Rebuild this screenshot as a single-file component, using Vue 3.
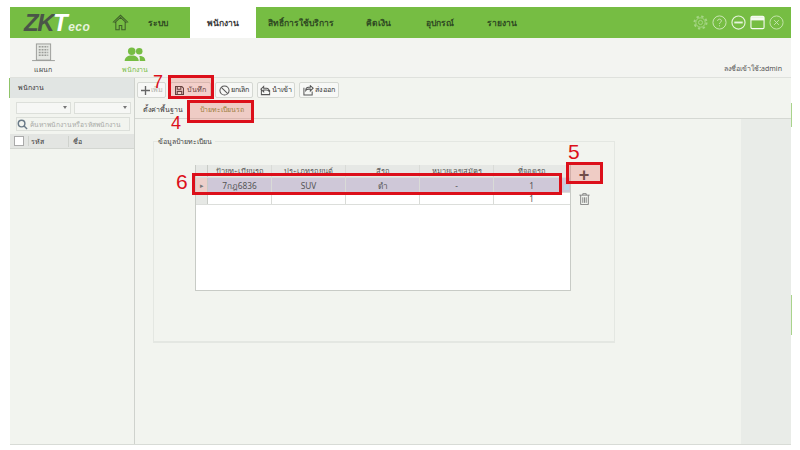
<script setup>
const menus = [
  { label: 'ระบบ', w: 60, first: true },
  { label: 'พนักงาน', w: 66, active: true },
  { label: 'สิทธิ์การใช้บริการ', w: 90 },
  { label: 'คิดเงิน', w: 64 },
  { label: 'อุปกรณ์', w: 60 },
  { label: 'รายงาน', w: 64 }
]
const cols = [
  { label: 'ป้ายทะเบียนรถ', w: 64 },
  { label: 'ประเภทรถยนต์', w: 74 },
  { label: 'สีรถ', w: 74 },
  { label: 'หมายเลขสมัคร', w: 74 },
  { label: 'ที่จอดรถ', w: 75 }
]
const row = ['7กฎ6836', 'SUV', 'ดำ', '-', '1']
</script>

<template>
  <div class="page">
    <div class="window">
      <header class="topbar">
        <div class="logo"><span class="zk">ZK</span><span class="t">T</span><span class="eco">eco</span></div>
        <svg class="home" viewBox="0 0 20 20" width="17" height="17" fill="none" stroke="#3f5f2a" stroke-width="1.200">
          <path d="M1 10 10 1.500 19 10M3 10.500 10 4l7 6.500M4.500 9.500V18.500h4v-5h3v5h4V9.500" />
        </svg>
        <nav class="menu">
          <span v-for="m in menus" :key="m.label" class="menu-item" :class="{ active: m.active, first: m.first }" :style="{ width: m.w + 'px' }">{{ m.label }}</span>
        </nav>
        <div class="winicons">
          <svg viewBox="0 0 16 16" width="15" height="15" fill="none" stroke="#a6d586" stroke-width="1"><circle cx="8" cy="8" r="2.200" /><circle cx="8" cy="8" r="5" /><circle cx="8" cy="8" r="6.500" stroke-width="2" stroke-dasharray="2.500 2.600" /></svg>
          <svg viewBox="0 0 16 16" width="15" height="15" fill="none" stroke="#cfe8bb" stroke-width="1"><circle cx="8" cy="8" r="7" /><path d="M6 6.300c0-2.500 4-2.500 4 0 0 1.500-2 1.500-2 3.200M8 11v1" /></svg>
          <svg viewBox="0 0 16 16" width="15" height="15" fill="none" stroke="#e6f3dc" stroke-width="1.200"><circle cx="8" cy="8" r="7" /><path d="M3.500 8h9" stroke-width="2" /></svg>
          <svg viewBox="0 0 16 16" width="15" height="15" fill="none" stroke="#f6faf2" stroke-width="1.200"><rect x="1" y="1.500" width="14" height="13" rx="1.500" /><path d="M1 4h14" stroke-width="3.500" /></svg>
          <svg viewBox="0 0 16 16" width="15" height="15" fill="none" stroke="#c6e5af" stroke-width="1"><circle cx="8" cy="8" r="7" /><path d="M5.500 5.500l5 5m0-5-5 5" /></svg>
        </div>
      </header>

      <section class="subnav">
        <div class="subitem dept">
          <svg viewBox="0 0 24 20" width="23" height="19" fill="none" stroke="#9a9c98" stroke-width="1"><rect x="4.500" y="1" width="15" height="17" fill="#e4e6e2" /><path d="M7 4h10M7 7h10M7 10h10M7 13h10" stroke-width="1.600" stroke-dasharray="2 1" /><path d="M0 18.500h24" /></svg>
          <span>แผนก</span>
        </div>
        <div class="subitem emp">
          <svg viewBox="0 0 22 16" width="22" height="15" fill="#76bd43"><circle cx="7.500" cy="4.500" r="4" /><circle cx="15.500" cy="4.500" r="3.500" /><path d="M0 15c0-4 3-6 7.500-6s7.500 2 7.500 6zM16 15h6c0-3.500-2-5.500-6.500-5.500 1 1.500.5 3.500.5 5.500z" /></svg>
          <span>พนักงาน</span>
        </div>
        <div class="login">ลงชื่อเข้าใช้:admin</div>
      </section>

      <div class="body">
        <aside class="sidebar">
          <div class="side-title">พนักงาน</div>
          <div class="selects">
            <div class="select s1"><i></i></div>
            <div class="select s2"><i></i></div>
          </div>
          <div class="search">
            <svg viewBox="0 0 12 12" width="11" height="11" fill="none" stroke="#6a7a88" stroke-width="1.600"><circle cx="5" cy="5" r="3.600" /><path d="M7.700 7.700 11 11" /></svg>
            <span>ค้นหาพนักงานหรือรหัสพนักงาน</span>
          </div>
          <div class="side-head">
            <span class="check"><b></b></span>
            <span class="h-code">รหัส</span>
            <span class="h-name">ชื่อ</span>
          </div>
        </aside>

        <main class="content">
          <div class="toolbar">
            <button class="tool add"><svg viewBox="0 0 10 10" width="9" height="9" stroke="#666" stroke-width="1.500"><path d="M5 0v10M0 5h10" /></svg><span class="muted">เพิ่ม</span></button>
            <button class="tool save">
              <svg viewBox="0 0 10 10" width="9" height="9" fill="none" stroke="#333" stroke-width="1.200"><path d="M.6.600h7l1.800 1.800v7H.6zM2.500.600v3h4v-3M2.500 9.400V6h5v3.400" /></svg>
              <span>บันทึก</span>
            </button>
            <button class="tool w38"><svg viewBox="0 0 12 12" width="11" height="11" fill="none" stroke="#555" stroke-width="1.100"><circle cx="6" cy="6" r="5" /><path d="M2.500 2.500l7 7" /></svg><span>ยกเลิก</span></button>
            <button class="tool w38"><svg viewBox="0 0 12 12" width="11" height="11" fill="none" stroke="#555" stroke-width="1.100"><path d="M1.500 5.500v5h9v-5M1 4.500 4 1.500v2h3c2 0 3 1.500 3 3.500-1-1.500-2-1.500-3-1.500H4v2z" /></svg><span>นำเข้า</span></button>
            <button class="tool w40"><svg viewBox="0 0 12 12" width="11" height="11" fill="none" stroke="#555" stroke-width="1.100"><path d="M1 3v8h9V7M11 3.500 8 .800v1.700H6c-2 0-3 1.500-3 3.500 1-1.500 2-1.500 3-1.500h2v2z" /></svg><span>ส่งออก</span></button>
          </div>

          <div class="tabs">
            <span class="tab">ตั้งค่าพื้นฐาน</span>
            <span class="tab current">ป้ายทะเบียนรถ</span>
          </div>

          <div class="panel">
            <div class="panel-main">
              <fieldset class="group">
                <legend>ข้อมูลป้ายทะเบียน</legend>
                <div class="grid-row">
                  <div class="table">
                    <div class="tr head">
                      <span class="gutter"></span>
                      <span v-for="c in cols" :key="c.label" class="td" :style="{ width: c.w + 'px' }">{{ c.label }}</span>
                    </div>
                    <div class="tr selected">
                      <span class="gutter">▸</span>
                      <span v-for="(v, i) in row" :key="i" class="td" :style="{ width: cols[i].w + 'px' }">{{ v }}</span>
                      <i class="cell-handle"></i>
                    </div>
                    <div class="tr blank">
                      <span class="gutter"></span>
                      <span v-for="(c, i) in cols" :key="c.label" class="td" :style="{ width: c.w + 'px' }">{{ i === 4 ? '1' : '' }}</span>
                    </div>
                  </div>
                  <div class="side-actions">
                    <button class="plus">+</button>
                    <svg viewBox="0 0 12 14" width="11" height="12" fill="none" stroke="#777" stroke-width="1"><path d="M0 2.500h12M4 2.500V.8h4v1.700M1.500 2.500v11h9v-11M4 5v6.500M6 5v6.500M8 5v6.500" /></svg>
                  </div>
                </div>
              </fieldset>
            </div>
            <div class="panel-side"></div>
          </div>
        </main>
      </div>

      <div class="mark box-save"></div>
      <div class="mark box-tab"></div>
      <div class="mark box-row"></div>
      <div class="mark box-plus"></div>
      <span class="num n7">7</span>
      <span class="num n4">4</span>
      <span class="num n6">6</span>
      <span class="num n5">5</span>
      <i class="edge e1"></i>
      <i class="edge e2"></i>
    </div>
  </div>
</template>

<style scoped>
.page {
  width: 800px;
  height: 450px;
  box-sizing: border-box;
  padding: 7px 9px 6px 10px;
  background: #fff;
  font-family: "Noto Sans", "Liberation Sans", sans-serif;
  overflow: hidden;
}
.window {
  position: relative;
  height: 100%;
  display: flex;
  flex-direction: column;
  background: #f2f4ef;
  border-bottom: 1px solid #d8dbd6;
}
.topbar {
  height: 31px;
  flex: none;
  display: flex;
  align-items: center;
  background: #76bd43;
}
.logo {
  width: 100px;
  flex: none;
  padding-left: 14px;
  box-sizing: border-box;
  font: italic 700 24px/1 "Liberation Sans", sans-serif;
  letter-spacing: -1.500px;
  color: #4a5548;
  white-space: nowrap;
}
.logo .t { color: #fff; font-size: 24px; }
.logo .eco { color: #e6f3dc; font-size: 12px; letter-spacing: .5px; margin-left: 2px; }
.home { margin: 0 0 1px 2px; flex: none; }
.menu {
  display: flex;
  height: 100%;
  margin-left: 1px;
}
.menu-item {
  display: flex;
  align-items: center;
  justify-content: center;
  white-space: nowrap;
  font-size: 8.500px;
  font-weight: 700;
  color: #2f4a22;
}
.menu-item.first { padding-right: 4px; box-sizing: border-box; }
.menu-item.active {
  background: #fff;
  color: #3a3a3a;
}
.winicons {
  margin-left: auto;
  margin-right: 7px;
  display: flex;
  gap: 4px;
}
.subnav {
  position: relative;
  height: 40px;
  flex: none;
  display: flex;
  background: #f3f4f1;
  border-bottom: 1px solid #dfe1dd;
  box-sizing: border-box;
  padding-top: 5px;
}
.subitem {
  display: flex;
  flex-direction: column;
  align-items: center;
  gap: 2px;
  font-size: 7px;
  line-height: 11px;
}
.dept { width: 44px; margin-left: 11px; color: #444; }
.emp { width: 40px; margin-left: 50px; color: #76bd43; padding-top: 4px; gap: 2px; }
.login {
  position: absolute;
  right: 9px;
  top: 25px;
  font-size: 7px;
  line-height: 11px;
  color: #555;
}
.body {
  flex: 1;
  display: flex;
  min-height: 0;
}
.sidebar {
  width: 125px;
  flex: none;
  box-sizing: border-box;
  border-right: 1px solid #cfd2cd;
}
.side-title {
  height: 20px;
  line-height: 20px;
  padding-left: 8px;
  font-size: 7px;
  color: #333;
  background: #e1e5e3;
  border-left: 1px solid #8fc468;
  margin-left: -1px;
}
.selects {
  display: flex;
  gap: 3px;
  padding: 4px 0 0 6px;
}
.select {
  position: relative;
  height: 12px;
  background: #f6f7f5;
  border: 1px solid #dcdfda;
  box-sizing: border-box;
}
.s1 { width: 55px; }
.s2 { width: 57px; }
.select i {
  position: absolute;
  right: 3px;
  top: 3px;
  border: 2.500px solid transparent;
  border-top: 3px solid #777;
  border-bottom: 0;
}
.search {
  margin: 3px 4px 0 6px;
  height: 14px;
  box-sizing: border-box;
  border: 1px solid #dcdfda;
  display: flex;
  align-items: center;
  gap: 2px;
  font-size: 6.700px;
  color: #a8aaa6;
  white-space: nowrap;
  overflow: hidden;
}
.side-head {
  margin-top: 3px;
  height: 14px;
  display: flex;
  align-items: center;
  background: #e3e5e2;
  border-bottom: 1px solid #d3d6d1;
  font-size: 7px;
  color: #333;
}
.check {
  width: 19px;
  display: flex;
  justify-content: center;
  border-right: 1px solid #cfd2cd;
  box-sizing: border-box;
}
.check b {
  width: 8px;
  height: 8px;
  background: #fff;
  border: 1px solid #aaa;
}
.h-code { width: 40px; padding-left: 2px; box-sizing: border-box; border-right: 1px solid #cfd2cd; }
.h-name { padding-left: 4px; }
.content {
  flex: 1;
  min-width: 0;
  display: flex;
  flex-direction: column;
}
.toolbar {
  height: 20px;
  flex: none;
  box-sizing: border-box;
  display: flex;
  align-items: center;
  gap: 4px;
  padding: 4px 0 0 2px;
}
.tool {
  height: 16px;
  box-sizing: border-box;
  display: flex;
  align-items: center;
  justify-content: center;
  gap: 1px;
  padding: 0;
  background: #f7f8f6;
  border: 1px solid #d5d8d3;
  border-radius: 2px;
  font: 7.200px/1 "Noto Sans", "Liberation Sans", sans-serif;
  color: #333;
}
.add { width: 29px; }
.add .muted { color: #b5b5b0; }
.save { width: 41px; gap: 3px; }
.w38 { width: 38px; }
.w40 { width: 40px; }
.tabs {
  height: 21px;
  flex: none;
  display: flex;
  align-items: flex-end;
  border-bottom: 1px solid #d5d8d3;
  box-sizing: border-box;
  font-size: 7px;
  color: #333;
}
.tab {
  line-height: 14px;
  height: 14px;
  padding: 0 0 1px 8px;
}
.tab.current {
  width: 57px;
  margin-left: 10px;
  box-sizing: border-box;
  text-align: center;
  color: #7d8a35;
  padding: 0;
  height: 18px;
  line-height: 20px;
}
.panel {
  flex: 1;
  display: flex;
  min-height: 0;
}
.panel-main {
  flex: 1;
  padding: 17px 0 0 18px;
  box-sizing: border-box;
}
.panel-side {
  width: 50px;
  flex: none;
  background: #e9ece8;
}
.group {
  width: 462px;
  height: 207px;
  box-sizing: border-box;
  margin: 0;
  padding: 0;
  border: 1px solid #e4e7e2;
  border-bottom-width: 2px;
  min-width: 0;
}
.group legend {
  padding: 0 3px 0 0;
  margin-left: 4px;
  font-size: 7px;
  color: #444;
  line-height: 11px;
}
.grid-row {
  display: flex;
  padding: 18px 0 0 41px;
}
.table {
  width: 376px;
  height: 126px;
  flex: none;
  box-sizing: border-box;
  background: #fff;
  border: 1px solid #c8cbc6;
  border-top: 0;
}
.tr {
  position: relative;
  display: flex;
  font-size: 7.500px;
  color: #555;
  border-bottom: 1px solid #dcdedb;
  box-sizing: border-box;
}
.tr.head { background: #e6e8e5; height: 13px; line-height: 12px; }
.tr.selected { height: 15px; line-height: 15px; background: #cfc8d8; font-size: 8.300px; }
.tr.blank { height: 12px; line-height: 11px; font-size: 8px; }
.gutter {
  width: 12px;
  flex: none;
  text-align: center;
  background: #e6e8e5;
  border-right: 1px solid #c8cbc6;
  box-sizing: border-box;
  font-size: 7px;
  color: #777;
}
.selected .gutter { background: #eccfca; }
.td {
  flex: none;
  box-sizing: border-box;
  text-align: center;
  border-right: 1px solid #d9dbd7;
  white-space: nowrap;
  overflow: hidden;
}
.td:last-of-type { border-right: 0; }
.cell-handle {
  position: absolute;
  right: 1px;
  top: 7px;
  width: 5px;
  height: 5px;
  background: #bcd8ea;
}
.side-actions {
  width: 26px;
  flex: none;
  display: flex;
  flex-direction: column;
  align-items: center;
  gap: 8px;
}
.plus {
  width: 26px;
  height: 20px;
  flex: none;
  padding: 0;
  border: 0;
  background: none;
  font: 700 18px/20px "Liberation Sans", sans-serif;
  color: #444;
}
.mark {
  position: absolute;
  box-sizing: border-box;
  border: 3px solid #dc0f1a;
  background: rgba(235, 100, 90, .28);
}
.box-save { left: 158px; top: 68px; width: 46px; height: 24px; }
.box-tab { left: 177px; top: 93px; width: 67px; height: 23px; }
.box-row { left: 182px; top: 166px; width: 370px; height: 22px; background: none; }
.box-plus { left: 556px; top: 155px; width: 37px; height: 22px; }
.num {
  position: absolute;
  color: #dc0f1a;
  line-height: 20px;
  font-family: "Liberation Sans", sans-serif;
}
.n7 { left: 143px; top: 65px; font-size: 18px; }
.n4 { left: 161px; top: 106px; font-size: 18px; }
.n6 { left: 166px; top: 165px; font-size: 21px; }
.n5 { left: 558px; top: 135px; font-size: 21px; }
.edge {
  position: absolute;
  right: -1px;
  width: 1px;
  background: #a9d38c;
}
.e1 { top: 96px; height: 24px; }
.e2 { top: 288px; height: 40px; }
</style>
